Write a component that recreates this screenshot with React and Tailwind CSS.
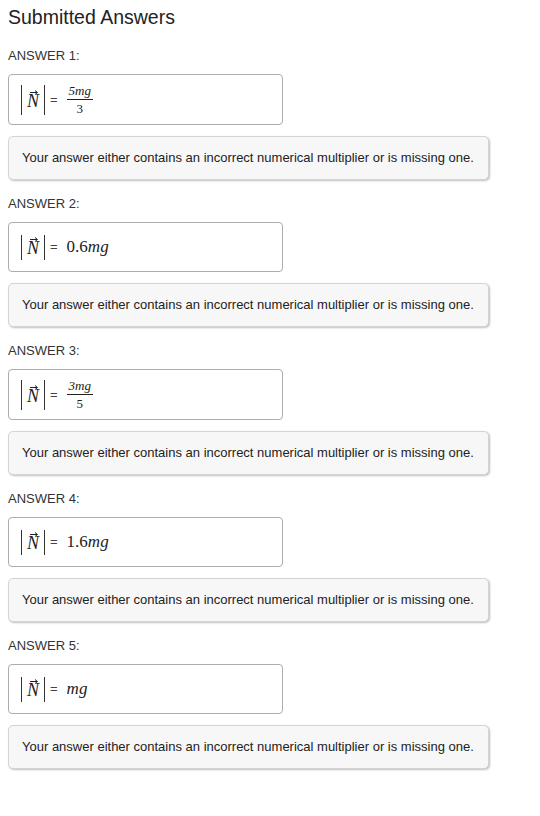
import React from 'react';

const answers = [
  { id: 1, kind: 'frac', num: '5mg', den: '3' },
  { id: 2, kind: 'inline', value: '0.6', unit: 'mg' },
  { id: 3, kind: 'frac', num: '3mg', den: '5' },
  { id: 4, kind: 'inline', value: '1.6', unit: 'mg' },
  { id: 5, kind: 'inline', value: '', unit: 'mg' },
];

const FEEDBACK =
  'Your answer either contains an incorrect numerical multiplier or is missing one.';

// |N| with the little vector arrow on top
const NormN = ({ tall }) => (
  <span className="flex items-center">
    <span className={`w-px bg-[#333] ${tall ? 'h-[30px]' : 'h-[25px]'}`} />
    <span className="flex flex-col items-center px-[5px]">
      <svg width="8" height="5" viewBox="0 0 8 5" className="mb-[-3px] ml-[2px]">
        <path d="M0 2.5 H7 M5 0.5 L7.5 2.5 L5 4.5" stroke="#222" strokeWidth="1" fill="none" />
      </svg>
      <span className="font-['Liberation_Serif',serif] italic text-[18px] leading-[18px] text-[#222]">
        N
      </span>
    </span>
    <span className={`w-px bg-[#333] ${tall ? 'h-[30px]' : 'h-[25px]'}`} />
  </span>
);

const MathAnswer = ({ answer }) => {
  const tall = answer.kind === 'frac';
  return (
    <div
      className={`w-[275px] rounded-[4px] border border-[#acacac] bg-white pl-[12px] flex items-center ${
        tall ? 'h-[51px]' : 'h-[50px]'
      }`}
    >
      <NormN tall={tall} />
      <span className="ml-[5px] mr-[9px] text-[13px] text-[#444] font-['Liberation_Sans',Arial,sans-serif]">
        =
      </span>
      {tall ? (
        <span className="flex flex-col items-center font-['Liberation_Serif',serif] text-[13px] leading-[13px] text-[#222]">
          <span className="px-[2px] pb-[2px] italic">{answer.num}</span>
          <span className="h-px w-full bg-[#222]" />
          <span className="pt-[2px]">{answer.den}</span>
        </span>
      ) : (
        <span className="font-['Liberation_Serif',serif] text-[17px] text-[#222]">
          {answer.value}
          <span className="italic">{answer.unit}</span>
        </span>
      )}
    </div>
  );
};

const App = () => {
  return (
    <div className="min-h-[816px] bg-white px-[8px] pt-[6px] font-['Liberation_Sans',Arial,sans-serif] text-[#333]">
      <h2 className="text-[19.5px] leading-[22px] text-[#222]">Submitted Answers</h2>
      {answers.map((answer, index) => (
        <div key={answer.id} className={index === 0 ? 'mt-[19px]' : 'mt-[15px]'}>
          <div className="text-[13px] leading-[17px] h-[17px]">ANSWER {answer.id}:</div>
          <div className="mt-[10px]">
            <MathAnswer answer={answer} />
          </div>
          <div className="mt-[11px] w-[481px] h-[44px] rounded-[5px] border border-[#d4d4d4] bg-[#f7f7f7] shadow-[1px_1px_2px_rgba(0,0,0,0.25)] pl-[13px] flex items-center text-[13px] text-[#222]">
            {FEEDBACK}
          </div>
        </div>
      ))}
    </div>
  );
};

export default App;
